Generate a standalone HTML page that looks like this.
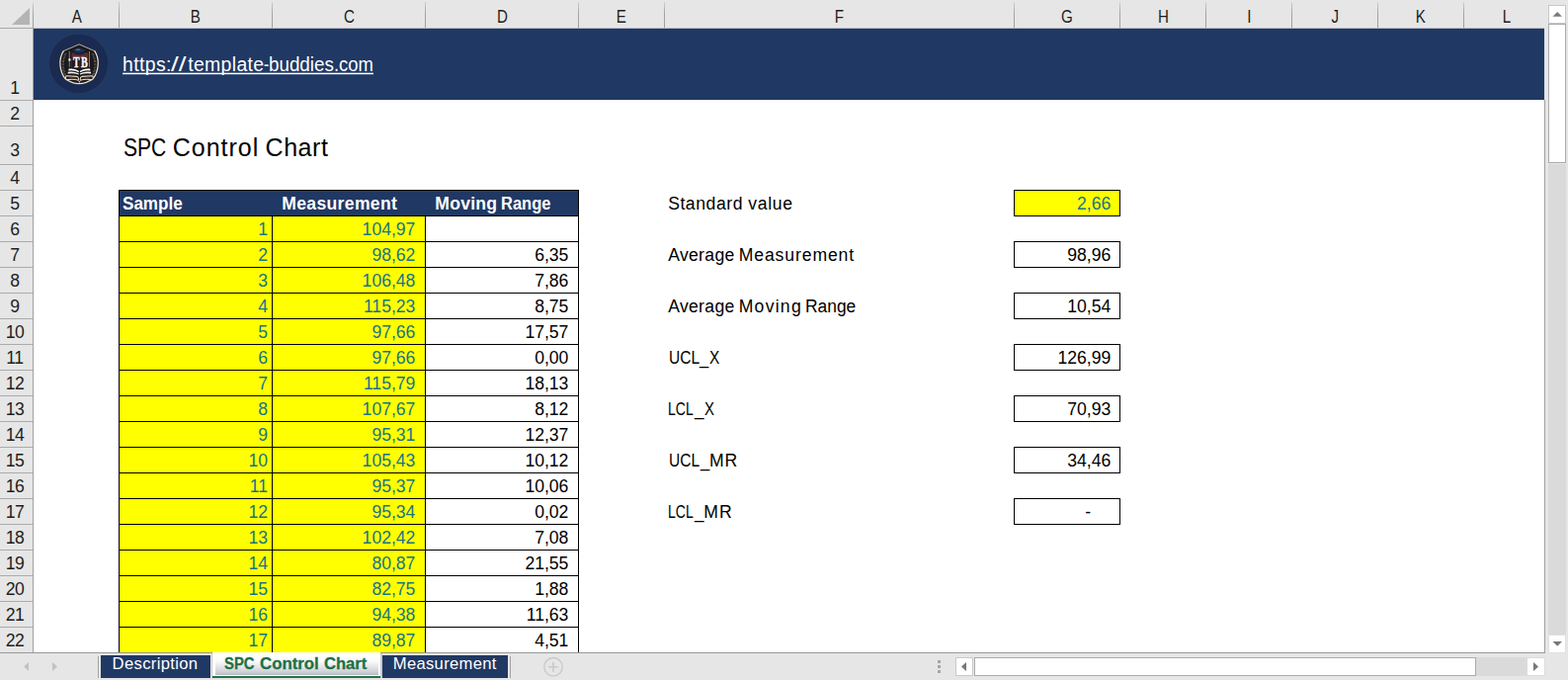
<!DOCTYPE html>
<html lang="en"><head><meta charset="utf-8"><title>SPC Control Chart</title>
<style>
*{box-sizing:border-box;margin:0;padding:0}
html,body{width:1587px;height:688px;overflow:hidden;background:#fff}
body{position:relative;font-family:"Liberation Sans",sans-serif;font-size:17.6px;color:#000;line-height:26px}
.a{position:absolute;white-space:nowrap}
.ch{position:absolute;top:0;height:28px;line-height:35px;text-align:center;color:#1e1e1e;padding-left:1px}
.cl{display:inline-block;transform:scaleX(.86)}
.cs{position:absolute;top:2px;width:1px;height:26px;background:linear-gradient(#cfcfcf,#a6a6a6 40%,#9c9c9c)}
.rh{position:absolute;left:0;width:30px;text-align:center;color:#1e1e1e;letter-spacing:-0.5px}
.rs{position:absolute;left:0;width:33px;height:1px;background:#ababab}
.y{background:#ff0}
.g{color:#1a7487}
.r{text-align:right}
.b{font-weight:bold}
.cell{position:absolute;height:26px;line-height:28px;white-space:nowrap}
.ln{position:absolute;background:#000}
.ws{position:absolute;white-space:pre}
.w{display:inline-block;transform-origin:0 50%;white-space:pre}
.tab{position:absolute;top:663px;height:23px;line-height:17px;background:#203864;color:#fff;font-size:16.4px;white-space:nowrap}
</style></head><body>

<div class="a" style="left:0;top:0;width:1587px;height:29px;background:#e6e6e6"></div>
<div class="a" style="left:0;top:29px;width:34px;height:631px;background:#e6e6e6"></div>
<div class="a" style="left:33px;top:29px;width:1px;height:631px;background:#a0a0a0"></div>
<div class="a" style="left:34px;top:28px;width:1529px;height:1px;background:#b4b8c2"></div>
<svg class="a" style="left:0;top:0" width="34" height="29"><polygon points="30,8 30,25 12,25" fill="#b4b4b4"/></svg>
<div class="cs" style="left:33px;top:3px;height:26px"></div>
<div class="a" style="left:0;top:28px;width:34px;height:1px;background:#a9a9a9"></div>
<div class="ch" style="left:34px;width:86px"><span class="cl">A</span></div>
<div class="cs" style="left:120px"></div>
<div class="ch" style="left:120px;width:155px"><span class="cl">B</span></div>
<div class="cs" style="left:275px"></div>
<div class="ch" style="left:275px;width:155px"><span class="cl">C</span></div>
<div class="cs" style="left:430px"></div>
<div class="ch" style="left:430px;width:155px"><span class="cl">D</span></div>
<div class="cs" style="left:585px"></div>
<div class="ch" style="left:585px;width:87px"><span class="cl">E</span></div>
<div class="cs" style="left:672px"></div>
<div class="ch" style="left:672px;width:354px"><span class="cl">F</span></div>
<div class="cs" style="left:1026px"></div>
<div class="ch" style="left:1026px;width:107px"><span class="cl">G</span></div>
<div class="cs" style="left:1133px"></div>
<div class="ch" style="left:1133px;width:87px"><span class="cl">H</span></div>
<div class="cs" style="left:1220px"></div>
<div class="ch" style="left:1220px;width:87px"><span class="cl">I</span></div>
<div class="cs" style="left:1307px"></div>
<div class="ch" style="left:1307px;width:87px"><span class="cl">J</span></div>
<div class="cs" style="left:1394px"></div>
<div class="ch" style="left:1394px;width:87px"><span class="cl">K</span></div>
<div class="cs" style="left:1481px"></div>
<div class="ch" style="left:1481px;width:87px"><span class="cl">L</span></div>
<div class="rh" style="top:29px;height:72px;line-height:26px;padding-top:47px">1</div>
<div class="rs" style="top:101px"></div>
<div class="rh" style="top:101px;height:26px;line-height:26px;padding-top:1px">2</div>
<div class="rs" style="top:127px"></div>
<div class="rh" style="top:127px;height:39px;line-height:26px;padding-top:12px">3</div>
<div class="rs" style="top:166px"></div>
<div class="rh" style="top:166px;height:26px;line-height:26px;padding-top:1px">4</div>
<div class="rs" style="top:192px"></div>
<div class="rh" style="top:192px;height:26px;line-height:26px;padding-top:1px">5</div>
<div class="rs" style="top:218px"></div>
<div class="rh" style="top:218px;height:26px;line-height:26px;padding-top:1px">6</div>
<div class="rs" style="top:244px"></div>
<div class="rh" style="top:244px;height:26px;line-height:26px;padding-top:1px">7</div>
<div class="rs" style="top:270px"></div>
<div class="rh" style="top:270px;height:26px;line-height:26px;padding-top:1px">8</div>
<div class="rs" style="top:296px"></div>
<div class="rh" style="top:296px;height:26px;line-height:26px;padding-top:1px">9</div>
<div class="rs" style="top:322px"></div>
<div class="rh" style="top:322px;height:26px;line-height:26px;padding-top:1px">10</div>
<div class="rs" style="top:348px"></div>
<div class="rh" style="top:348px;height:26px;line-height:26px;padding-top:1px">11</div>
<div class="rs" style="top:374px"></div>
<div class="rh" style="top:374px;height:26px;line-height:26px;padding-top:1px">12</div>
<div class="rs" style="top:400px"></div>
<div class="rh" style="top:400px;height:26px;line-height:26px;padding-top:1px">13</div>
<div class="rs" style="top:426px"></div>
<div class="rh" style="top:426px;height:26px;line-height:26px;padding-top:1px">14</div>
<div class="rs" style="top:452px"></div>
<div class="rh" style="top:452px;height:26px;line-height:26px;padding-top:1px">15</div>
<div class="rs" style="top:478px"></div>
<div class="rh" style="top:478px;height:26px;line-height:26px;padding-top:1px">16</div>
<div class="rs" style="top:504px"></div>
<div class="rh" style="top:504px;height:26px;line-height:26px;padding-top:1px">17</div>
<div class="rs" style="top:530px"></div>
<div class="rh" style="top:530px;height:26px;line-height:26px;padding-top:1px">18</div>
<div class="rs" style="top:556px"></div>
<div class="rh" style="top:556px;height:26px;line-height:26px;padding-top:1px">19</div>
<div class="rs" style="top:582px"></div>
<div class="rh" style="top:582px;height:26px;line-height:26px;padding-top:1px">20</div>
<div class="rs" style="top:608px"></div>
<div class="rh" style="top:608px;height:26px;line-height:26px;padding-top:1px">21</div>
<div class="rs" style="top:634px"></div>
<div class="rh" style="top:634px;height:26px;line-height:26px;padding-top:1px">22</div>
<div class="rs" style="top:660px"></div>
<div class="a" style="left:34px;top:29px;width:1529px;height:72px;background:#203864"></div>
<svg class="a" style="left:44px;top:29px" width="72" height="72" viewBox="0 0 688 688">
<circle cx="340" cy="338" r="282" fill="#1a2a50"/>
<g transform="translate(152.9,143.3) scale(0.5556)">
<path d="M75 130 L345 15 L615 130 C705 260 690 480 590 610 Q470 700 345 700 Q220 700 100 610 C0 480 -15 260 75 130 Z" fill="#1b1a1e"/>
<path d="M615 130 C705 260 690 480 590 610 Q470 700 345 700 Q220 700 100 610 C0 480 -15 260 75 130" fill="none" stroke="#eadfca" stroke-width="22"/>
<path d="M62 136 L345 15 L628 136" fill="none" stroke="#eadfca" stroke-width="13" stroke-linejoin="miter"/>
<path d="M112 175 C45 300 50 470 128 590" fill="none" stroke="#8d7f6c" stroke-width="34" stroke-dasharray="10 15"/>
<path d="M578 175 C645 300 640 470 562 590" fill="none" stroke="#8d7f6c" stroke-width="34" stroke-dasharray="10 15"/>
<path d="M176 135V410M524 135V410" stroke="#d9cbb3" stroke-width="10"/>
<rect x="200" y="236" width="300" height="200" fill="#26161a"/>
<path d="M216 262V420M352 262V420M498 262V420" stroke="#6a2c2e" stroke-width="18" stroke-dasharray="16 14"/>
<rect x="214" y="163" width="288" height="76" fill="#6e2f2f"/>
<path d="M214 200H502" stroke="#3d1a1c" stroke-width="8"/>
<path d="M252 132 L345 92 L442 132 L442 178 Q345 222 252 178 Z" fill="#17233f"/>
<path d="M226 122 L345 78 L464 122 L345 158 Z" fill="#203459"/>
<path d="M288 106H362" stroke="#86a8d2" stroke-width="12"/>
<rect x="162" y="264" width="34" height="38" fill="#fff"/>
<text y="420" font-family="Liberation Serif,serif" font-size="236" font-weight="bold" fill="#fff" stroke="#fff" stroke-width="7"><tspan x="240" textLength="112" lengthAdjust="spacingAndGlyphs">T</tspan><tspan x="378" textLength="116" lengthAdjust="spacingAndGlyphs">B</tspan></text>
<path d="M165 440 Q255 425 340 478 L340 502 Q255 455 160 472 Z M535 440 Q445 425 360 478 L360 502 Q445 455 540 472 Z" fill="#fff"/>
<path d="M150 495 Q250 480 338 520 L338 542 Q250 508 148 524 Z M550 495 Q450 480 362 520 L362 542 Q450 508 552 524 Z" fill="#f6f3ee"/>
<path d="M112 588 Q110 562 140 562 L300 574 Q334 582 334 612 L334 640 Q250 616 132 630 Q108 626 112 588 Z M588 588 Q590 562 560 562 L400 574 Q366 582 366 612 L366 640 Q450 616 568 630 Q592 626 588 588 Z" fill="#1d1416" stroke="#eadfca" stroke-width="18" stroke-linejoin="round"/>
<path d="M170 598 Q240 594 296 608 M530 598 Q460 594 404 608" fill="none" stroke="#8a6a58" stroke-width="9"/>
<circle cx="350" cy="668" r="14" fill="#eadfca"/>
</g>
</svg>
<div class="ws" style="left:124.10px;top:52px;font-size:19.4px;line-height:26px;color:#fff;"><span class="w" style="letter-spacing:0.372px;margin-right:-1.26px">https:</span><span class="w" style="transform:scaleX(1.4314);margin-right:6.93px">//</span><span class="w" style="letter-spacing:0.359px;margin-right:-0.64px">template</span><span class="w" style="transform:scaleX(0.8000);margin-right:-1.53px">-</span><span class="w" style="transform:scaleX(0.9694);margin-right:-1.51px">buddies</span><span class="w" style="transform:scaleX(0.9507)">.com</span></div>
<div class="a" style="left:124px;top:73px;width:254px;height:3px;background:linear-gradient(rgba(255,255,255,.3) 0 1px,#fff 1px 2px,rgba(255,255,255,.2) 2px 3px)"></div>
<div class="ws" style="left:124.66px;top:134px;font-size:25px;line-height:30px;"><span class="w" style="transform:scaleX(0.8421);margin-right:-8.21px">SPC </span><span class="w" style="letter-spacing:0.977px;margin-right:-1.65px">Control </span><span class="w" style="letter-spacing:0.553px">Chart</span></div>
<div class="a" style="left:120px;top:192px;width:466px;height:27px;background:#000"></div>
<div class="a" style="left:121px;top:193px;width:464px;height:25px;background:#203864"></div>
<div class="ws" style="left:124.00px;top:192px;font-size:17.6px;line-height:28px;font-weight:bold;color:#fff;"><span class="w" style="transform:scaleX(0.9698)">Sample</span></div>
<div class="ws" style="left:285.30px;top:192px;font-size:17.6px;line-height:28px;font-weight:bold;color:#fff;"><span class="w" style="letter-spacing:0.314px">Measurement</span></div>
<div class="ws" style="left:440.30px;top:192px;font-size:17.6px;line-height:28px;font-weight:bold;color:#fff;"><span class="w" style="letter-spacing:0.235px;margin-right:-1.44px">Moving </span><span class="w" style="transform:scaleX(0.9380)">Range</span></div>
<div class="cell y g r" style="left:121px;top:218px;width:154px;padding-right:4px">1</div>
<div class="cell y g r" style="left:276px;top:218px;width:154px;padding-right:9.6px">104,97</div>
<div class="cell r" style="left:431px;top:218px;width:154px;padding-right:9.6px"></div>
<div class="cell y g r" style="left:121px;top:244px;width:154px;padding-right:4px">2</div>
<div class="cell y g r" style="left:276px;top:244px;width:154px;padding-right:9.6px">98,62</div>
<div class="cell r" style="left:431px;top:244px;width:154px;padding-right:9.6px">6,35</div>
<div class="cell y g r" style="left:121px;top:270px;width:154px;padding-right:4px">3</div>
<div class="cell y g r" style="left:276px;top:270px;width:154px;padding-right:9.6px">106,48</div>
<div class="cell r" style="left:431px;top:270px;width:154px;padding-right:9.6px">7,86</div>
<div class="cell y g r" style="left:121px;top:296px;width:154px;padding-right:4px">4</div>
<div class="cell y g r" style="left:276px;top:296px;width:154px;padding-right:9.6px">115,23</div>
<div class="cell r" style="left:431px;top:296px;width:154px;padding-right:9.6px">8,75</div>
<div class="cell y g r" style="left:121px;top:322px;width:154px;padding-right:4px">5</div>
<div class="cell y g r" style="left:276px;top:322px;width:154px;padding-right:9.6px">97,66</div>
<div class="cell r" style="left:431px;top:322px;width:154px;padding-right:9.6px">17,57</div>
<div class="cell y g r" style="left:121px;top:348px;width:154px;padding-right:4px">6</div>
<div class="cell y g r" style="left:276px;top:348px;width:154px;padding-right:9.6px">97,66</div>
<div class="cell r" style="left:431px;top:348px;width:154px;padding-right:9.6px">0,00</div>
<div class="cell y g r" style="left:121px;top:374px;width:154px;padding-right:4px">7</div>
<div class="cell y g r" style="left:276px;top:374px;width:154px;padding-right:9.6px">115,79</div>
<div class="cell r" style="left:431px;top:374px;width:154px;padding-right:9.6px">18,13</div>
<div class="cell y g r" style="left:121px;top:400px;width:154px;padding-right:4px">8</div>
<div class="cell y g r" style="left:276px;top:400px;width:154px;padding-right:9.6px">107,67</div>
<div class="cell r" style="left:431px;top:400px;width:154px;padding-right:9.6px">8,12</div>
<div class="cell y g r" style="left:121px;top:426px;width:154px;padding-right:4px">9</div>
<div class="cell y g r" style="left:276px;top:426px;width:154px;padding-right:9.6px">95,31</div>
<div class="cell r" style="left:431px;top:426px;width:154px;padding-right:9.6px">12,37</div>
<div class="cell y g r" style="left:121px;top:452px;width:154px;padding-right:4px">10</div>
<div class="cell y g r" style="left:276px;top:452px;width:154px;padding-right:9.6px">105,43</div>
<div class="cell r" style="left:431px;top:452px;width:154px;padding-right:9.6px">10,12</div>
<div class="cell y g r" style="left:121px;top:478px;width:154px;padding-right:4px">11</div>
<div class="cell y g r" style="left:276px;top:478px;width:154px;padding-right:9.6px">95,37</div>
<div class="cell r" style="left:431px;top:478px;width:154px;padding-right:9.6px">10,06</div>
<div class="cell y g r" style="left:121px;top:504px;width:154px;padding-right:4px">12</div>
<div class="cell y g r" style="left:276px;top:504px;width:154px;padding-right:9.6px">95,34</div>
<div class="cell r" style="left:431px;top:504px;width:154px;padding-right:9.6px">0,02</div>
<div class="cell y g r" style="left:121px;top:530px;width:154px;padding-right:4px">13</div>
<div class="cell y g r" style="left:276px;top:530px;width:154px;padding-right:9.6px">102,42</div>
<div class="cell r" style="left:431px;top:530px;width:154px;padding-right:9.6px">7,08</div>
<div class="cell y g r" style="left:121px;top:556px;width:154px;padding-right:4px">14</div>
<div class="cell y g r" style="left:276px;top:556px;width:154px;padding-right:9.6px">80,87</div>
<div class="cell r" style="left:431px;top:556px;width:154px;padding-right:9.6px">21,55</div>
<div class="cell y g r" style="left:121px;top:582px;width:154px;padding-right:4px">15</div>
<div class="cell y g r" style="left:276px;top:582px;width:154px;padding-right:9.6px">82,75</div>
<div class="cell r" style="left:431px;top:582px;width:154px;padding-right:9.6px">1,88</div>
<div class="cell y g r" style="left:121px;top:608px;width:154px;padding-right:4px">16</div>
<div class="cell y g r" style="left:276px;top:608px;width:154px;padding-right:9.6px">94,38</div>
<div class="cell r" style="left:431px;top:608px;width:154px;padding-right:9.6px">11,63</div>
<div class="cell y g r" style="left:121px;top:634px;width:154px;padding-right:4px">17</div>
<div class="cell y g r" style="left:276px;top:634px;width:154px;padding-right:9.6px">89,87</div>
<div class="cell r" style="left:431px;top:634px;width:154px;padding-right:9.6px">4,51</div>
<div class="ln" style="left:120px;top:218px;width:1px;height:442px"></div>
<div class="ln" style="left:275px;top:218px;width:1px;height:442px"></div>
<div class="ln" style="left:430px;top:218px;width:1px;height:442px"></div>
<div class="ln" style="left:585px;top:218px;width:1px;height:442px"></div>
<div class="ln" style="left:120px;top:218px;width:466px;height:1px"></div>
<div class="ln" style="left:120px;top:244px;width:466px;height:1px"></div>
<div class="ln" style="left:120px;top:270px;width:466px;height:1px"></div>
<div class="ln" style="left:120px;top:296px;width:466px;height:1px"></div>
<div class="ln" style="left:120px;top:322px;width:466px;height:1px"></div>
<div class="ln" style="left:120px;top:348px;width:466px;height:1px"></div>
<div class="ln" style="left:120px;top:374px;width:466px;height:1px"></div>
<div class="ln" style="left:120px;top:400px;width:466px;height:1px"></div>
<div class="ln" style="left:120px;top:426px;width:466px;height:1px"></div>
<div class="ln" style="left:120px;top:452px;width:466px;height:1px"></div>
<div class="ln" style="left:120px;top:478px;width:466px;height:1px"></div>
<div class="ln" style="left:120px;top:504px;width:466px;height:1px"></div>
<div class="ln" style="left:120px;top:530px;width:466px;height:1px"></div>
<div class="ln" style="left:120px;top:556px;width:466px;height:1px"></div>
<div class="ln" style="left:120px;top:582px;width:466px;height:1px"></div>
<div class="ln" style="left:120px;top:608px;width:466px;height:1px"></div>
<div class="ln" style="left:120px;top:634px;width:466px;height:1px"></div>
<div class="ws" style="left:676.15px;top:192px;font-size:17.6px;line-height:28px;"><span class="w" style="letter-spacing:0.554px;margin-right:-0.23px">Standard </span><span class="w" style="letter-spacing:0.706px">value</span></div>
<div class="cell r y g" style="left:1026px;top:192px;width:108px;height:27px;border:1px solid #000;padding-right:8.8px;line-height:26px">2,66</div>
<div class="ws" style="left:676.15px;top:244px;font-size:17.6px;line-height:28px;"><span class="w" style="letter-spacing:0.320px;margin-right:-1.11px">Average </span><span class="w" style="letter-spacing:0.892px">Measurement</span></div>
<div class="cell r" style="left:1026px;top:244px;width:108px;height:27px;border:1px solid #000;padding-right:8.8px;line-height:26px">98,96</div>
<div class="ws" style="left:676.15px;top:296px;font-size:17.6px;line-height:28px;"><span class="w" style="letter-spacing:0.320px;margin-right:-1.11px">Average </span><span class="w" style="letter-spacing:1.254px;margin-right:-3.27px">Moving </span><span class="w" style="transform:scaleX(0.9888)">Range</span></div>
<div class="cell r" style="left:1026px;top:296px;width:108px;height:27px;border:1px solid #000;padding-right:8.8px;line-height:26px">10,54</div>
<div class="ws" style="left:676.52px;top:348px;font-size:17.6px;line-height:28px;"><span class="w" style="transform:scaleX(0.8834);margin-right:-3.28px">UCL</span><span class="w" style="transform:scaleX(0.9364);margin-right:-0.72px">_</span><span class="w" style="transform:scaleX(0.8750)">X</span></div>
<div class="cell r" style="left:1026px;top:348px;width:108px;height:27px;border:1px solid #000;padding-right:8.8px;line-height:26px">126,99</div>
<div class="ws" style="left:676.40px;top:400px;font-size:17.6px;line-height:28px;"><span class="w" style="transform:scaleX(0.7971);margin-right:-5.31px">LCL</span><span class="w" style="transform:scaleX(0.9636);margin-right:-0.45px">_</span><span class="w" style="transform:scaleX(0.8500)">X</span></div>
<div class="cell r" style="left:1026px;top:400px;width:108px;height:27px;border:1px solid #000;padding-right:8.8px;line-height:26px">70,93</div>
<div class="ws" style="left:676.52px;top:452px;font-size:17.6px;line-height:28px;"><span class="w" style="transform:scaleX(0.8834);margin-right:-2.98px">UCL</span><span class="w" style="transform:scaleX(0.9364);margin-right:-0.52px">_</span><span class="w" style="letter-spacing:0.744px">MR</span></div>
<div class="cell r" style="left:1026px;top:452px;width:108px;height:27px;border:1px solid #000;padding-right:8.8px;line-height:26px">34,46</div>
<div class="ws" style="left:676.40px;top:504px;font-size:17.6px;line-height:28px;"><span class="w" style="transform:scaleX(0.7971);margin-right:-5.31px">LCL</span><span class="w" style="transform:scaleX(0.9636);margin-right:-0.85px">_</span><span class="w" style="letter-spacing:0.944px">MR</span></div>
<div class="cell" style="left:1026px;top:504px;width:108px;height:27px;border:1px solid #000;text-align:right;padding-right:29px;line-height:27px">-</div>
<div class="a" style="left:1563px;top:29px;width:1px;height:632px;background:#a0a0a0"></div>
<div class="a" style="left:1563px;top:29px;width:1px;height:72px;background:#dfe3ea"></div>
<div class="a" style="left:0;top:660px;width:1587px;height:28px;background:#e6e6e6"></div>
<div class="a" style="left:0;top:660px;width:1564px;height:1px;background:#999"></div>
<svg class="a" style="left:18px;top:666px" width="50" height="16"><polygon points="11,4 11,13 6,8.5" fill="#c2c2c2"/><polygon points="35,4 35,13 40,8.5" fill="#c2c2c2"/></svg>
<div class="a" style="left:99px;top:664px;width:1px;height:22px;background:#a3a3a3"></div>
<div class="tab" style="left:102px;width:111px"></div>
<div class="ws" style="left:113.60px;top:663px;font-size:16.6px;line-height:17px;color:#fff;"><span class="w" style="letter-spacing:0.343px">Description</span></div>
<div class="a" style="left:213px;top:661px;width:2px;height:25px;background:#f0f0f0"></div>
<div class="a" style="left:214px;top:661px;width:1px;height:25px;background:#c4c4c4"></div>
<div class="a" style="left:385px;top:661px;width:2px;height:25px;background:#c9c9c9"></div>
<div class="a" style="left:215px;top:660px;width:170px;height:26px;background:#fff;border-bottom:2px solid #217346"></div>
<div class="a" style="left:218px;top:661px;width:165px;height:22px;background:linear-gradient(#fff 0%,#fbfbfc 35%,#d4d6dc 80%,#b9bcc6 100%)"></div>
<div class="ws" style="left:227.30px;top:661px;font-size:17.2px;line-height:21px;font-weight:bold;color:#1e7145;-webkit-text-stroke:0.3px #1e7145;"><span class="w" style="transform:scaleX(0.8618);margin-right:-4.32px">SPC </span><span class="w" style="transform:scaleX(0.9781);margin-right:-0.57px">Control </span><span class="w" style="transform:scaleX(0.9655)">Chart</span></div>
<div class="tab" style="left:387px;width:127px"></div>
<div class="ws" style="left:397.80px;top:663px;font-size:16.6px;line-height:17px;color:#fff;"><span class="w" style="letter-spacing:0.306px">Measurement</span></div>
<div class="a" style="left:516px;top:664px;width:1px;height:22px;background:#a3a3a3"></div>
<svg class="a" style="left:548px;top:663px" width="24" height="24"><circle cx="12" cy="11.7" r="9.2" fill="none" stroke="#c9c9c9" stroke-width="1.3"/><path d="M12 6.7V16.7M7 11.7H17" stroke="#c9c9c9" stroke-width="1.6"/></svg>
<div class="a" style="left:949px;top:668px;width:3px;height:3px;background:#a6a6a6"></div>
<div class="a" style="left:949px;top:673px;width:3px;height:3px;background:#a6a6a6"></div>
<div class="a" style="left:949px;top:678px;width:3px;height:3px;background:#a6a6a6"></div>
<div class="a" style="left:967px;top:665px;width:18px;height:19px;background:#fff;border:1px solid #cacaca"></div>
<svg class="a" style="left:967px;top:665px" width="19" height="19"><polygon points="11,5 11,14 6,9.5" fill="#777"/></svg>
<div class="a" style="left:986px;top:665px;width:508px;height:19px;background:#fff;border:1px solid #ababab"></div>
<div class="a" style="left:1494px;top:665px;width:51px;height:19px;background:#dadada"></div>
<div class="a" style="left:1545px;top:665px;width:19px;height:19px;background:#fff;border:1px solid #dcdcdc"></div>
<svg class="a" style="left:1545px;top:665px" width="19" height="19"><polygon points="7,5 7,14 12,9.5" fill="#777"/></svg>
<div class="a" style="left:1564px;top:29px;width:23px;height:631px;background:#e6e6e6"></div>
<div class="a" style="left:1567px;top:166px;width:18px;height:477px;background:#dadada"></div>
<div class="a" style="left:1567px;top:5px;width:18px;height:19px;background:#fff;border:1px solid #c8c8c8"></div>
<svg class="a" style="left:1567px;top:5px" width="18" height="19"><polygon points="4.5,11.8 14,11.8 9.25,7" fill="#7a7a7a"/></svg>
<div class="a" style="left:1567px;top:24px;width:18px;height:141px;background:#fff;border:1px solid #ababab"></div>
<div class="a" style="left:1567px;top:642px;width:18px;height:19px;background:#fff;border:1px solid #e0e0e0"></div>
<svg class="a" style="left:1567px;top:642px" width="18" height="19"><polygon points="4.5,7 14,7 9.25,11.8" fill="#777"/></svg>
</body></html>
